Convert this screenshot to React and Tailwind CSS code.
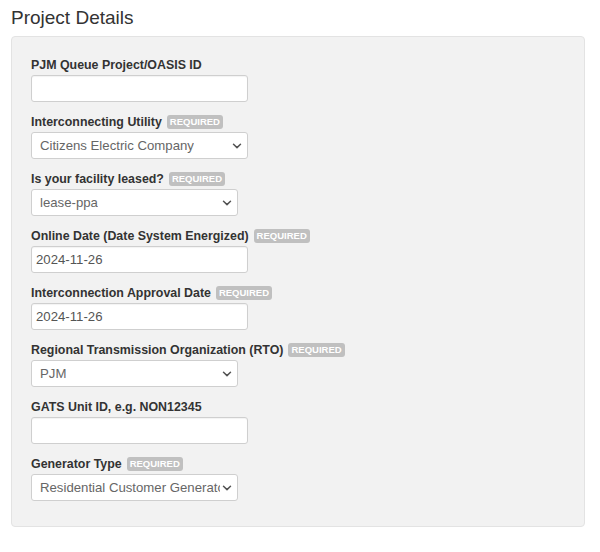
import React from "react";

const Badge = () => (
  <span className="inline-flex items-center h-[14px] px-[3px] rounded-[3px] bg-[#c0c0c0] text-white text-[9.5px] font-bold leading-none">
    REQUIRED
  </span>
);

const Chevron = () => (
  <svg width="10" height="6" viewBox="0 0 10 6" className="absolute right-[5px] top-1/2 -translate-y-1/2">
    <path d="M1.5 1.2 L5 4.6 L8.5 1.2" fill="none" stroke="#555" strokeWidth="1.5" strokeLinecap="round" strokeLinejoin="round" />
  </svg>
);

const Label = ({ text, required }) => (
  <div className="flex items-center gap-[5px] h-[16px] mb-[2px] text-[12.4px] font-bold text-[#333] leading-[16px] whitespace-nowrap">
    <span>{text}</span>
    {required && <Badge />}
  </div>
);

const TextInput = ({ value }) => (
  <div className="w-[217px] h-[27px] bg-white border border-[#cfcfcf] rounded-[3px] shadow-[inset_0_1px_1px_rgba(0,0,0,0.05)] pl-[4px] flex items-center text-[13.2px] text-[#555]">
    {value}
  </div>
);

const Select = ({ value, w }) => (
  <div className={`relative ${w} h-[27px] bg-white border border-[#cfcfcf] rounded-[3px] pl-[8px] pr-[17px] flex items-center text-[13.2px] text-[#666] overflow-hidden whitespace-nowrap`}>
    <span className="overflow-hidden">{value}</span>
    <Chevron />
  </div>
);

export default function App() {
  return (
    <div className="pl-[11px] bg-white min-h-[552px]" style={{ fontFamily: '"Liberation Sans", Arial, Helvetica, sans-serif' }}>
      <div className="h-[36px] pt-[6px] text-[19px] leading-[24px] text-[#333]">Project Details</div>
      <div className="w-[574px] bg-[#f2f2f2] border border-[#e3e3e3] rounded-[4px] pt-[20px] pb-[25px] pl-[19px] flex flex-col gap-[12px]">
        <div>
          <Label text="PJM Queue Project/OASIS ID" />
          <TextInput value="" />
        </div>
        <div>
          <Label text="Interconnecting Utility" required />
          <Select value="Citizens Electric Company" w="w-[217px]" />
        </div>
        <div>
          <Label text="Is your facility leased?" required />
          <Select value="lease-ppa" w="w-[207px]" />
        </div>
        <div>
          <Label text="Online Date (Date System Energized)" required />
          <TextInput value="2024-11-26" />
        </div>
        <div>
          <Label text="Interconnection Approval Date" required />
          <TextInput value="2024-11-26" />
        </div>
        <div>
          <Label text="Regional Transmission Organization (RTO)" required />
          <Select value="PJM" w="w-[207px]" />
        </div>
        <div>
          <Label text="GATS Unit ID, e.g. NON12345" />
          <TextInput value="" />
        </div>
        <div>
          <Label text="Generator Type" required />
          <Select value="Residential Customer Generator" w="w-[207px]" />
        </div>
      </div>
    </div>
  );
}
